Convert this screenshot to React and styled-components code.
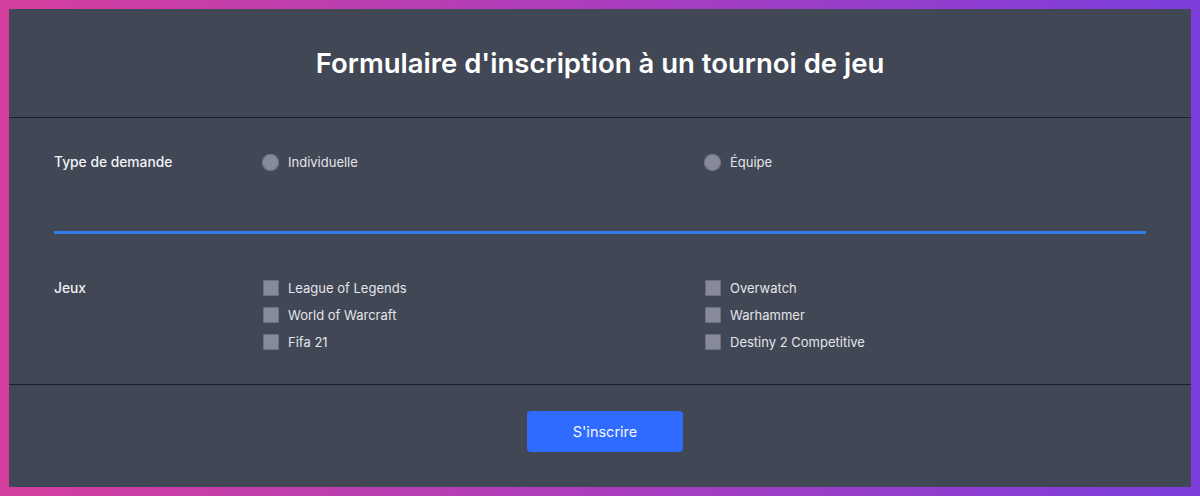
import styled, { createGlobalStyle } from 'styled-components'

const GlobalStyle = createGlobalStyle`
  html, body {
    margin: 0;
    padding: 0;
  }
  body {
    font-family: Inter, "Noto Sans", sans-serif;
    background: #414755;
  }
`

const Frame = styled.div`
  width: 1200px;
  height: 496px;
  box-sizing: border-box;
  padding: 9px;
  background: linear-gradient(90deg, #d43f9e 0%, #a73dc0 55%, #7c3edd 100%);
`

const Panel = styled.form`
  height: 100%;
  background: #414755;
  display: flex;
  flex-direction: column;
`

const Header = styled.div`
  height: 108px;
  display: flex;
  align-items: center;
  justify-content: center;
  border-bottom: 1px solid #1e1f28;
`

const Title = styled.h1`
  margin: 0;
  font-size: 27.5px;
  font-weight: 600;
  color: #ffffff;
`

const Body = styled.div`
  padding: 0 45px;
  border-bottom: 1px solid #1e1f28;
`

const Row = styled.div`
  display: grid;
  grid-template-columns: 208px 1fr 1fr;
  padding: ${(p) => p.$pad};
  border-bottom: ${(p) => (p.$accent ? '3px solid #2f7de8' : 'none')};
`

const Label = styled.div`
  font-size: 13.8px;
  font-weight: 500;
  color: #f1f2f5;
  line-height: 18px;
`

const Column = styled.div`
  display: flex;
  flex-direction: column;
  gap: 9px;
`

const Option = styled.label`
  display: flex;
  align-items: center;
  gap: 9px;
  font-size: 13px;
  color: #e3e5ea;
  line-height: 18px;
`

const Radio = styled.span`
  width: 17px;
  height: 17px;
  border-radius: 50%;
  background: #878a98;
  box-shadow: inset 0 0 0 1px #6e7180;
  flex-shrink: 0;
`

const Box = styled.span`
  width: 16px;
  height: 16px;
  margin-left: 1px;
  border-radius: 2px;
  background: #878a98;
  box-shadow: inset 0 0 0 1px #6e7180;
  flex-shrink: 0;
`

const Footer = styled.div`
  flex: 1;
  display: flex;
  align-items: flex-start;
  justify-content: center;
  padding: 26px 0 0 10px;
`

const Button = styled.button`
  width: 156px;
  height: 41px;
  border: none;
  border-radius: 4px;
  background: #2f6bff;
  color: #f4f6ff;
  font-family: Inter, "Noto Sans", sans-serif;
  font-size: 14.5px;
  cursor: pointer;
`

const leftGames = ['League of Legends', 'World of Warcraft', 'Fifa 21']
const rightGames = ['Overwatch', 'Warhammer', 'Destiny 2 Competitive']

const App = () => {
  return (
    <>
      <GlobalStyle />
      <Frame>
        <Panel onSubmit={(e) => e.preventDefault()}>
          <Header>
            <Title>Formulaire d'inscription à un tournoi de jeu</Title>
          </Header>
          <Body>
            <Row $pad="35px 0 60px" $accent>
              <Label>Type de demande</Label>
              <Option><Radio />Individuelle</Option>
              <Option><Radio />Équipe</Option>
            </Row>
            <Row $pad="45px 0 33px">
              <Label>Jeux</Label>
              <Column>
                {leftGames.map((g) => (
                  <Option key={g}><Box />{g}</Option>
                ))}
              </Column>
              <Column>
                {rightGames.map((g) => (
                  <Option key={g}><Box />{g}</Option>
                ))}
              </Column>
            </Row>
          </Body>
          <Footer>
            <Button type="submit">S'inscrire</Button>
          </Footer>
        </Panel>
      </Frame>
    </>
  )
}

export default App
